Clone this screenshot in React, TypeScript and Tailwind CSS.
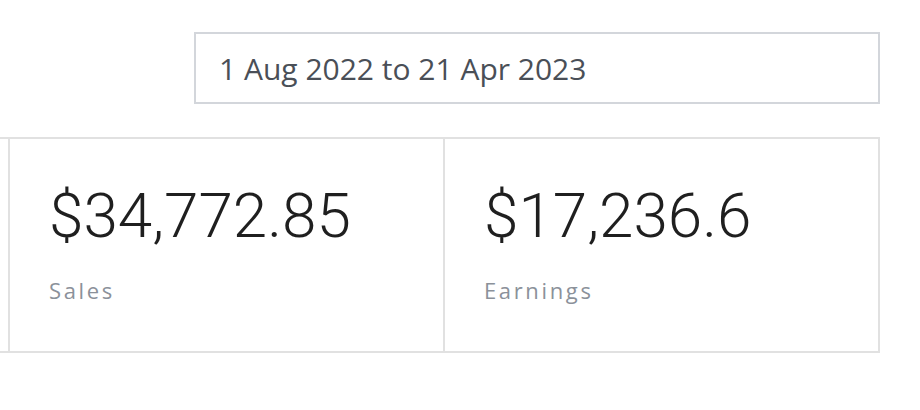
import React from "react";

export default function App() {
  return (
    <div className="w-[920px] h-[410px] bg-white overflow-hidden">
      <div className="flex justify-end pr-[40px] pt-[32px]">
        <div
          className="w-[686px] h-[72px] border-2 border-[#d3d6db] flex items-center pl-[23px] text-[30px] text-[#4a4f57]"
          style={{ fontFamily: '"Open Sans", sans-serif' }}
        >
          1 Aug 2022 to 21 Apr 2023
        </div>
      </div>
      <div className="mt-[33px] flex w-[880px] h-[216px] border-y-2 border-[#e1e1e1]">
        <div className="w-[10px] border-r-2 border-[#e1e1e1]" />
        <div className="w-[435px] border-r-2 border-[#e1e1e1] pl-[39px] pt-[46px]">
          <div
            className="text-[62px] leading-none font-light text-[#1f1f1f]"
            style={{ fontFamily: 'Roboto, sans-serif' }}
          >
            $34,772.85
          </div>
          <div
            className="mt-[32px] text-[22px] leading-none tracking-[0.12em] text-[#8b919a]"
            style={{ fontFamily: '"Open Sans", sans-serif' }}
          >
            Sales
          </div>
        </div>
        <div className="flex-1 border-r-2 border-[#e1e1e1] pl-[39px] pt-[46px]">
          <div
            className="text-[62px] leading-none font-light text-[#1f1f1f]"
            style={{ fontFamily: 'Roboto, sans-serif' }}
          >
            $17,236.6
          </div>
          <div
            className="mt-[32px] text-[22px] leading-none tracking-[0.12em] text-[#8b919a]"
            style={{ fontFamily: '"Open Sans", sans-serif' }}
          >
            Earnings
          </div>
        </div>
      </div>
    </div>
  );
}
